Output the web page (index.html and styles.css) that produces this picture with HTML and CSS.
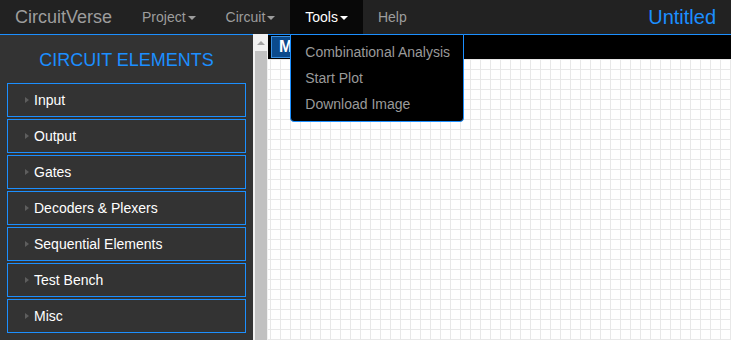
FILE: index.html
```html
<!DOCTYPE html>
<html>
<head>
<meta charset="utf-8">
<link rel="stylesheet" href="styles.css">
</head>
<body>
<header class="navbar">
  <div class="brand">CircuitVerse</div>
  <ul class="nav">
    <li class="nav-item">Project<span class="caret"></span></li>
    <li class="nav-item">Circuit<span class="caret"></span></li>
    <li class="nav-item active">Tools<span class="caret"></span>
      <ul class="dropdown">
        <li class="dropdown-item">Combinational Analysis</li>
        <li class="dropdown-item">Start Plot</li>
        <li class="dropdown-item">Download Image</li>
      </ul>
    </li>
    <li class="nav-item">Help</li>
  </ul>
  <div class="title">Untitled</div>
</header>
<main class="main">
  <aside class="sidebar">
    <h2 class="heading">CIRCUIT ELEMENTS</h2>
    <div class="panel"><span class="tri"></span>Input</div>
    <div class="panel"><span class="tri"></span>Output</div>
    <div class="panel"><span class="tri"></span>Gates</div>
    <div class="panel"><span class="tri"></span>Decoders &amp; Plexers</div>
    <div class="panel"><span class="tri"></span>Sequential Elements</div>
    <div class="panel"><span class="tri"></span>Test Bench</div>
    <div class="panel"><span class="tri"></span>Misc</div>
  </aside>
  <div class="scrollbar">
    <div class="scroll-btn"><span class="up"></span></div>
    <div class="thumb"></div>
  </div>
  <section class="canvas-area">
    <div class="tabbar"><div class="tab">M</div></div>
    <div class="grid"></div>
  </section>
</main>
</body>
</html>
```

FILE: styles.css
```css
html, body {
  margin: 0;
  padding: 0;
  height: 340px;
  overflow: hidden;
  font-family: "Liberation Sans", Arial, sans-serif;
  background: #fff;
}

.navbar {
  display: flex;
  align-items: center;
  height: 34px;
  background: #222;
}

.brand {
  padding: 0 15px;
  font-size: 18px;
  line-height: 34px;
  color: #9d9d9d;
}

.nav {
  display: flex;
  list-style: none;
  margin: 0;
  padding: 0;
}

.nav-item {
  position: relative;
  padding: 0 15px;
  line-height: 34px;
  font-size: 14px;
  color: #9d9d9d;
}

.nav-item.active {
  background: #080808;
  color: #fff;
}

.caret {
  display: inline-block;
  width: 0;
  height: 0;
  margin-left: 2px;
  vertical-align: middle;
  border-top: 4px solid;
  border-left: 4px solid transparent;
  border-right: 4px solid transparent;
}

.dropdown {
  position: absolute;
  top: 34px;
  left: 0;
  z-index: 10;
  width: 174px;
  box-sizing: border-box;
  margin: 0;
  padding: 4px 0;
  list-style: none;
  background: #000;
  border: 1px solid #1c8fff;
  border-radius: 0 0 4px 4px;
}

.dropdown-item {
  padding-left: 14px;
  line-height: 26px;
  font-size: 14px;
  color: #9a9a9a;
  white-space: nowrap;
}

.title {
  margin-left: auto;
  margin-right: 15px;
  font-size: 20px;
  color: #1c8fff;
}

.main {
  display: flex;
  height: 306px;
}

.sidebar {
  width: 253px;
  box-sizing: border-box;
  padding: 13px 7px 0 7px;
  background: #333;
  border-top: 1px solid #1c8fff;
}

.heading {
  margin: 0 0 11px 0;
  font-size: 18px;
  font-weight: normal;
  line-height: 24px;
  text-align: center;
  color: #1c8fff;
}

.panel {
  display: flex;
  align-items: center;
  height: 34px;
  box-sizing: border-box;
  margin-bottom: 2px;
  padding-left: 17px;
  border: 1px solid #1c8fff;
  background: #333;
  color: #fff;
  font-size: 14px;
  line-height: 32px;
}

.tri {
  width: 0;
  height: 0;
  margin-right: 5px;
  border-left: 4px solid #5e5e5e;
  border-top: 3px solid transparent;
  border-bottom: 3px solid transparent;
}

.scrollbar {
  width: 15px;
  display: flex;
  flex-direction: column;
  background: #f1f1f1;
}

.scroll-btn {
  height: 17px;
  display: flex;
  justify-content: center;
  align-items: center;
}

.up {
  width: 0;
  height: 0;
  border-bottom: 4px solid #a3a3a3;
  border-left: 4px solid transparent;
  border-right: 4px solid transparent;
}

.thumb {
  flex: 1;
  margin: 0 1px 0 2px;
  background: #c1c1c1;
}

.canvas-area {
  flex: 1;
  display: flex;
  flex-direction: column;
  border-top: 1px solid #1c8fff;
}

.tabbar {
  height: 24px;
  box-sizing: border-box;
  padding: 1px 0 0 3px;
  background: #000;
}

.tab {
  display: inline-block;
  width: 30px;
  height: 22px;
  box-sizing: border-box;
  padding: 0 7px;
  background: #0b4a8c;
  border: 1px solid #3a90e0;
  color: #fff;
  font-size: 16px;
  font-weight: bold;
  line-height: 20px;
}

.grid {
  flex: 1;
  background-color: #fff;
  background-image:
    linear-gradient(to right, #e8e8e8 1px, transparent 1px),
    linear-gradient(to bottom, #e8e8e8 1px, transparent 1px);
  background-size: 10px 10px;
  background-position: 2px 0;
}
```
